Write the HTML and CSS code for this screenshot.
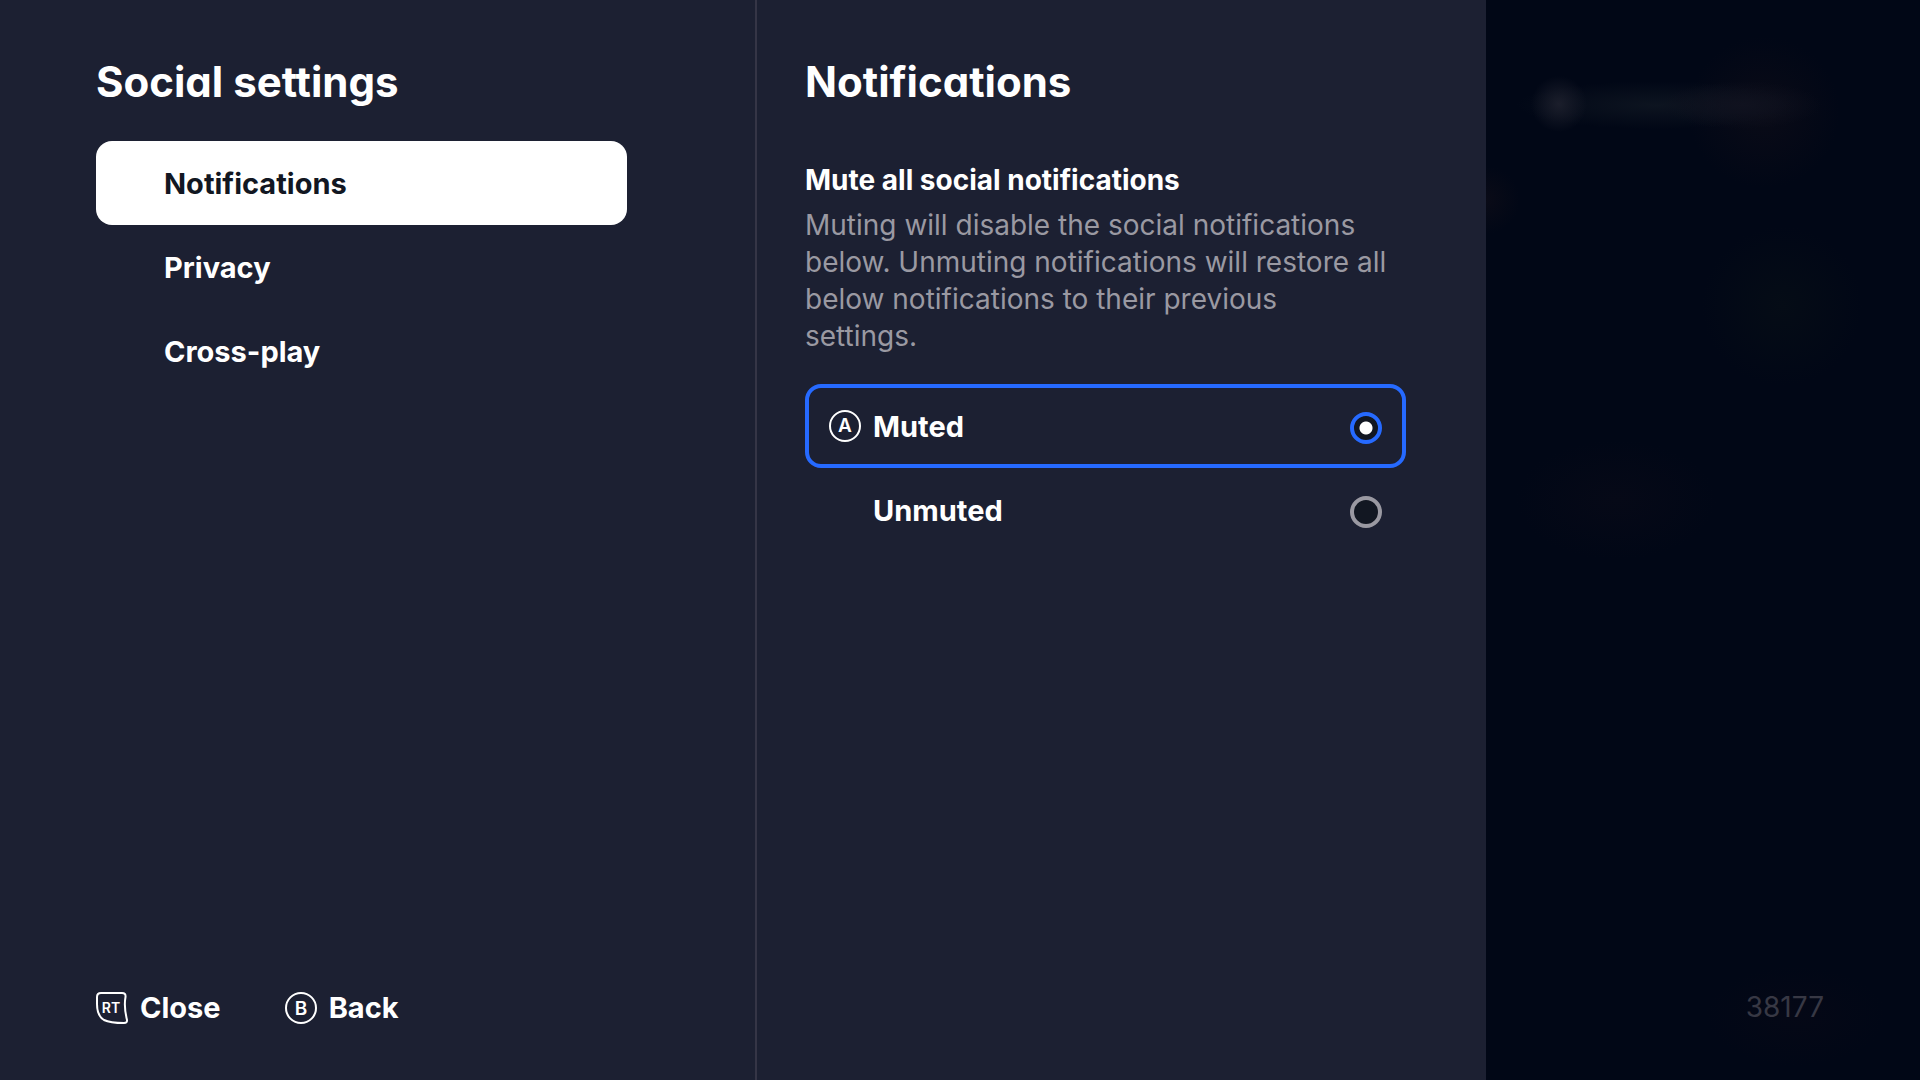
FILE: index.html
```html
<!DOCTYPE html>
<html lang="en">
<head>
<meta charset="UTF-8">
<meta name="viewport" content="width=device-width, initial-scale=1.0">
<title>Social settings</title>
<link rel="stylesheet" href="styles.css">
</head>
<body>
    <div class="screen">
        <section class="menu">
            <h1>Social settings</h1>
            <nav class="menu-list">
                <a class="menu-item active" href="#notifications">Notifications</a>
                <a class="menu-item" href="#privacy">Privacy</a>
                <a class="menu-item" href="#cross-play">Cross-play</a>
            </nav>
            <footer class="actions">
                <button type="button" class="action">
                    <svg class="key" viewBox="0 0 32 32" aria-hidden="true">
                        <path d="M5 1H26Q30 1 29.500 5C28 13 29 20 31 28Q31.300 31 28 31C18 31 12 30 8 28C3 25 1 20 1 12V5Q1 1 5 1Z" />
                        <text x="15" y="21" class="key-small">RT</text>
                    </svg>
                    Close
                </button>
                <button type="button" class="action">
                    <svg class="key" viewBox="0 0 32 32" aria-hidden="true">
                        <circle cx="16" cy="16" r="15" />
                        <text x="16" y="23">B</text>
                    </svg>
                    Back
                </button>
            </footer>
        </section>

        <main class="detail" id="notifications">
            <h2>Notifications</h2>
            <form>
                <h3 id="mute-title">Mute all social notifications</h3>
                <p>Muting will disable the social notifications below. Unmuting notifications will restore all below notifications to their previous settings.</p>
                <div class="options" role="radiogroup" aria-labelledby="mute-title">
                    <label class="option focused">
                        <svg class="key" viewBox="0 0 32 32" aria-hidden="true">
                            <circle cx="16" cy="16" r="15" />
                            <text x="16" y="22">A</text>
                        </svg>
                        <span>Muted</span>
                        <input type="radio" name="mute" value="muted" checked>
                    </label>
                    <label class="option">
                        <span>Unmuted</span>
                        <input type="radio" name="mute" value="unmuted">
                    </label>
                </div>
            </form>
        </main>

        <aside class="backdrop">
            <span class="build">38177</span>
        </aside>
    </div>
</body>
</html>
```
FILE: styles.css
```css
* {
  box-sizing: border-box;
}
body {
  margin: 0;
  background-color: #010716;
  color: #fff;
  font-family: Inter, "Liberation Sans", sans-serif;
  font-size: 28px;
  line-height: 37px;
}
h1, h2, h3, p {
  margin: 0;
}
h1, h2 {
  font-size: 42px;
  line-height: 52px;
  font-weight: 700;
  font-feature-settings: "cv11";
}
.screen {
  display: grid;
  grid-template-columns: 757fr 729fr 434fr;
  min-height: 100vh;
}
.menu,
.detail {
  background-color: #1c2032;
  padding-top: 56px;
}
.menu {
  display: flex;
  flex-direction: column;
  padding-left: 96px;
  padding-right: 128px;
  padding-bottom: 54px;
  border-right: 2px solid #353546;
}
.menu-list {
  margin-top: 33px;
}
.menu-item {
  display: flex;
  align-items: center;
  height: 84px;
  padding-left: 68px;
  border-radius: 16px;
  color: #fff;
  font-size: 29px;
  font-weight: 700;
  text-decoration: none;
}
.menu-item.active {
  background-color: #fff;
  color: #121722;
}
.actions {
  display: flex;
  gap: 64px;
  margin-top: auto;
}
.action {
  display: flex;
  align-items: center;
  gap: 12px;
  padding: 0;
  border: none;
  background: none;
  color: #fff;
  font: inherit;
  font-size: 29px;
  font-weight: 700;
  cursor: pointer;
}
.key {
  width: 32px;
  height: 32px;
  fill: none;
  stroke: #fff;
  stroke-width: 2;
}
.key text {
  fill: #fff;
  stroke: none;
  font-size: 19px;
  font-weight: 600;
  text-anchor: middle;
}
.key .key-small {
  font-size: 14px;
}
.detail {
  padding-left: 48px;
  padding-right: 80px;
}
h3 {
  margin-top: 54px;
  font-size: 28px;
  line-height: 37px;
  font-weight: 700;
}
.detail p {
  margin-top: 8px;
  padding-right: 12px;
  color: #9a99a2;
}
.options {
  margin-top: 29px;
}
.option {
  display: flex;
  align-items: center;
  height: 84px;
  padding: 0 20px 0 64px;
  border: 4px solid transparent;
  border-radius: 16px;
  font-size: 29px;
  font-weight: 700;
  cursor: pointer;
}
.option.focused {
  gap: 12px;
  padding-left: 20px;
  border-color: #266aff;
}
.option input {
  appearance: none;
  width: 32px;
  height: 32px;
  margin: 4px 0 0 auto;
  border: 4px solid #9a99a2;
  border-radius: 50%;
  background-color: #121722;
}
.option input:checked {
  border-color: #266aff;
  background-image: radial-gradient(circle, #fff 6px, transparent 7px);
}
/* out of focus home screen behind the panel */
.backdrop {
  display: flex;
  align-items: flex-end;
  justify-content: flex-end;
  padding: 0 96px 54px 0;
  background-image:
    radial-gradient(circle at 73px 104px, #1b1e2b, #1b1e2b00 28px),
    radial-gradient(ellipse 80px 24px at 256px 105px, #10121f, #10121f00),
    radial-gradient(ellipse 140px 24px at 170px 105px, #0d1420, #0d142000),
    radial-gradient(circle at 278px 112px, #0a0b17, #0a0b1700 76px),
    radial-gradient(circle at 0 200px, #0a0b17, #0a0b1700 34px),
    radial-gradient(circle at 296px 306px, #050c16, #050c1600 80px),
    radial-gradient(ellipse 100px 60px at 130px 500px, #060917, #06091700),
    radial-gradient(ellipse 90px 50px at 310px 1016px, #050816, #05081600);
}
.build {
  color: #373844;
}
```
